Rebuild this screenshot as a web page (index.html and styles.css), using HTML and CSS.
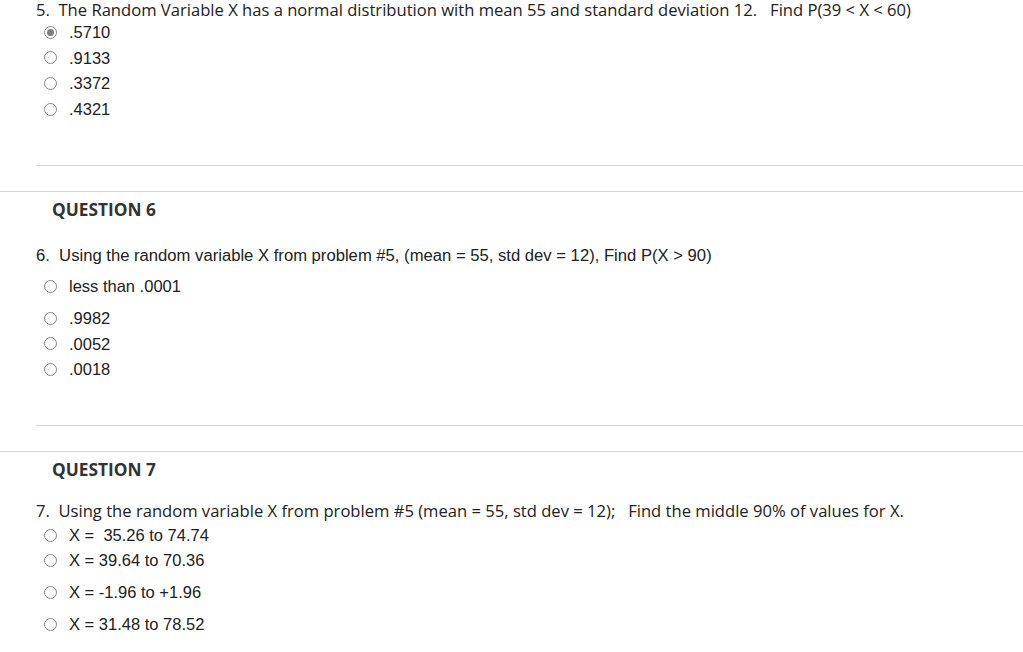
FILE: index.html
```html
<!DOCTYPE html>
<html>
<head>
<meta charset="utf-8">
<link rel="stylesheet" href="styles.css">
</head>
<body>
<div class="page">
  <section class="question">
    <div class="qtext sans">5.  The Random Variable X has a normal distribution with mean 55 and standard deviation 12.   Find P(39 &lt; X &lt; 60)</div>
    <ul class="options first-tight">
      <li class="opt"><span class="radio checked"></span><span class="label">.5710</span></li>
      <li class="opt"><span class="radio"></span><span class="label">.9133</span></li>
      <li class="opt"><span class="radio"></span><span class="label">.3372</span></li>
      <li class="opt"><span class="radio"></span><span class="label">.4321</span></li>
    </ul>
    <div class="separator"></div>
  </section>

  <section class="question">
    <h2 class="qhead">QUESTION 6</h2>
    <div class="qtext arial q6">6.  Using the random variable X from problem #5, (mean = 55, std dev = 12), Find P(X &gt; 90)</div>
    <ul class="options">
      <li class="opt wide"><span class="radio"></span><span class="label">less than .0001</span></li>
      <li class="opt wide"><span class="radio"></span><span class="label">.9982</span></li>
      <li class="opt"><span class="radio"></span><span class="label">.0052</span></li>
      <li class="opt"><span class="radio"></span><span class="label">.0018</span></li>
    </ul>
    <div class="separator"></div>
  </section>

  <section class="question">
    <h2 class="qhead">QUESTION 7</h2>
    <div class="qtext sans q7">7.  Using the random variable X from problem #5 (mean = 55, std dev = 12);   Find the middle 90% of values for X.</div>
    <ul class="options">
      <li class="opt near"><span class="radio"></span><span class="label">X =  35.26 to 74.74</span></li>
      <li class="opt tight"><span class="radio"></span><span class="label">X = 39.64 to 70.36</span></li>
      <li class="opt wide"><span class="radio"></span><span class="label">X = -1.96 to +1.96</span></li>
      <li class="opt wide"><span class="radio"></span><span class="label">X = 31.48 to 78.52</span></li>
    </ul>
  </section>
</div>
</body>
</html>
```
FILE: styles.css
```css
html, body {
  margin: 0;
  padding: 0;
  background: #ffffff;
}

.page {
  width: 1023px;
  color: #222222;
}

.question {
  display: block;
}

.question + .question {
  border-top: 1px solid #d4d4d4;
  margin-top: 25px;
}

.qhead {
  margin: 6px 0 0 52px;
  font-family: "Open Sans", sans-serif;
  font-weight: 700;
  font-size: 17.3px;
  line-height: 24px;
  color: #333333;
}

.qtext {
  padding-left: 36px;
  white-space: pre;
  line-height: 20px;
  color: #222222;
}

.sans {
  font-family: "Open Sans", sans-serif;
  font-size: 16.6px;
}

.arial {
  font-family: "Liberation Sans", Arial, sans-serif;
  font-size: 16.65px;
}

.q6 {
  margin-top: 24px;
}

.q7 {
  margin-top: 19px;
}

.options {
  list-style: none;
  margin: 0;
  padding: 0 0 0 44px;
}

.opt {
  display: flex;
  align-items: center;
  height: 24px;
  margin-top: 1.7px;
}

.first-tight .opt:first-child {
  margin-top: 0;
}

.opt.wide {
  margin-top: 8px;
}

.opt.near {
  margin-top: 2px;
}

.opt.tight {
  margin-top: 1px;
}

.radio {
  box-sizing: border-box;
  width: 13px;
  height: 13px;
  border: 1.5px solid #888888;
  border-radius: 50%;
  background: #ffffff;
  display: flex;
  align-items: center;
  justify-content: center;
  flex: none;
}

.radio.checked::after {
  content: "";
  width: 7px;
  height: 7px;
  border-radius: 50%;
  background: #7d7d7d;
}

.label {
  margin-left: 12px;
  font-family: "Liberation Sans", Arial, sans-serif;
  font-size: 16.5px;
  line-height: 24px;
  white-space: pre;
  color: #222222;
}

.separator {
  margin: 44px 0 0 36px;
  border-top: 1px solid #d4d4d4;
}
```
